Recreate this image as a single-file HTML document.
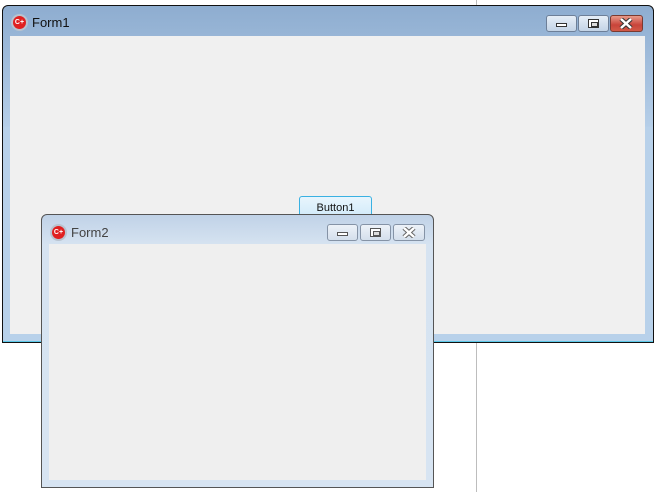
<!DOCTYPE html>
<html><head><style>
body{margin:0;width:660px;height:492px;background:#fff;position:relative;overflow:hidden;font-family:"Liberation Sans","Noto Sans CJK JP",sans-serif}
.abs{position:absolute}
.vline{left:476px;top:0;width:1px;height:492px;background:#bdbdbd}
#f1{left:2px;top:5px;width:650px;height:336px;border:1px solid #111;border-radius:6px 6px 0 0;background:linear-gradient(#8eadd0 0,#b5cee8 120px,#b8d1ea 121px,#b8d1ea 100%);box-shadow:inset 0 -1px 0 #5cc8e8}
#c1{left:10px;top:36px;width:635px;height:298px;background:#f0f0f0}
#f2{left:41px;top:214px;width:391px;height:272px;border:1px solid #555;border-radius:6px 6px 0 0;background:linear-gradient(#c0d2e7 0,#d6e3f1 30px,#d7e4f2 100%)}
#c2{left:49px;top:244px;width:377px;height:236px;background:#efefef}
.t{font-size:13px;color:#111}
.icon{width:13px;height:13px;border-radius:50%;background:#e02020;box-shadow:0 0 0 2px #b9c3cf;color:#fff;font-size:7px;font-weight:bold;line-height:13px;text-align:center}
.btn{height:15px;border:1px solid #6d7f98;border-radius:3px;background:linear-gradient(#e6eef7,#c3d3e6)}
.btn i{position:absolute;display:block}
#b1{left:299px;top:196px;width:71px;height:22px;border:1px solid #3ab1e2;border-radius:3px;background:linear-gradient(#e8f5fd,#cfe9f9);font-size:11px;text-align:center;line-height:23px;color:#111}
</style></head><body>
<div class="abs vline"></div>
<div class="abs" id="f1"></div>
<div class="abs" id="c1"></div>
<div class="abs icon" style="left:13px;top:16px">C+</div>
<div class="abs t" style="left:32px;top:15px">Form1</div>
<div class="abs btn" style="left:546px;top:15px;width:29px"><i style="left:9px;top:7px;width:11px;height:4px;border:1px solid #333;background:#fff;box-sizing:border-box"></i></div>
<div class="abs btn" style="left:578px;top:15px;width:29px"><i style="left:9px;top:3px;width:11px;height:9px;border:1px solid #333;background:#fff;box-sizing:border-box"><b style="position:absolute;left:2px;top:2px;width:5px;height:3px;border:1px solid #333;background:#ddd;box-sizing:content-box"></b></i></div>
<div class="abs btn" style="left:610px;top:15px;width:31px;border-color:#7a3a30;background:linear-gradient(#e89a8a,#c8443a 60%,#d25a48)"><svg style="position:absolute;left:8px;top:2px" width="14" height="11"><path d="M2 1L12 10M12 1L2 10" stroke="#333" stroke-width="4.5"/><path d="M2 1L12 10M12 1L2 10" stroke="#fff" stroke-width="2.5"/></svg></div>
<div class="abs" id="b1">Button1</div>
<div class="abs" id="f2"></div>
<div class="abs" id="c2"></div>
<div class="abs icon" style="left:52px;top:226px">C+</div>
<div class="abs t" style="left:71px;top:225px;color:#444">Form2</div>
<div class="abs btn" style="left:327px;top:224px;width:29px;border-color:#8593a6;background:linear-gradient(#edf2f8,#d4dfec)"><i style="left:9px;top:7px;width:11px;height:4px;border:1px solid #555;background:#fff;box-sizing:border-box"></i></div>
<div class="abs btn" style="left:360px;top:224px;width:29px;border-color:#8593a6;background:linear-gradient(#edf2f8,#d4dfec)"><i style="left:9px;top:3px;width:11px;height:9px;border:1px solid #555;background:#fff;box-sizing:border-box"><b style="position:absolute;left:2px;top:2px;width:5px;height:3px;border:1px solid #555;background:#ddd;box-sizing:content-box"></b></i></div>
<div class="abs btn" style="left:393px;top:224px;width:30px;border-color:#8593a6;background:linear-gradient(#edf2f8,#d4dfec)"><svg style="position:absolute;left:8px;top:2px" width="14" height="11"><path d="M2 1L12 10M12 1L2 10" stroke="#666" stroke-width="4.5"/><path d="M2 1L12 10M12 1L2 10" stroke="#fff" stroke-width="2.5"/></svg></div>
</body></html>
